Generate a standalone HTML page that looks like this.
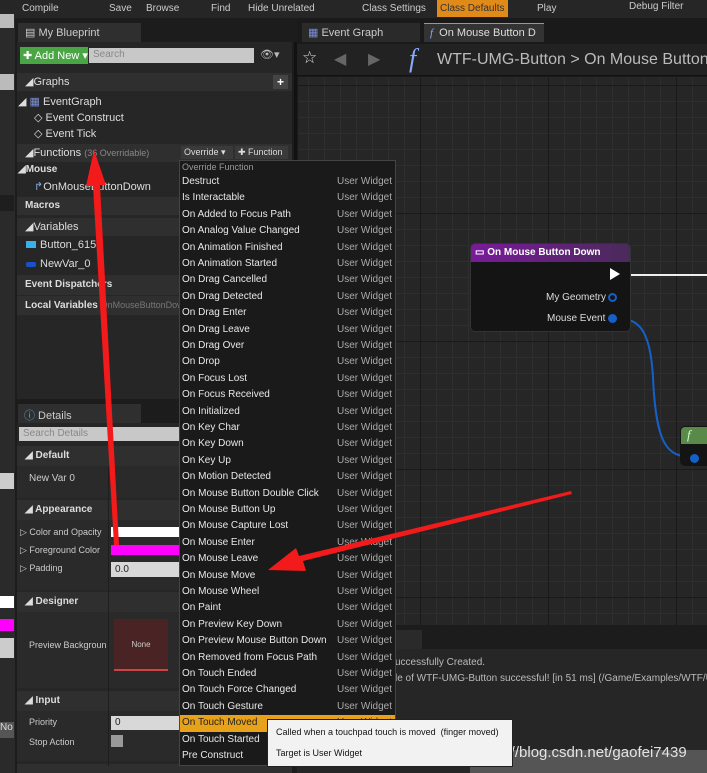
<!DOCTYPE html><html><head><style>
*{margin:0;padding:0;box-sizing:border-box}
body{width:707px;height:773px;overflow:hidden;background:#1a1a1a;font-family:"Liberation Sans",sans-serif;font-size:10px;color:#ddd;position:relative}
.a{position:absolute;white-space:nowrap}
.mi{position:absolute;left:182px;width:212px;height:16px;font-size:10px;color:#e8e8e8;line-height:16px}
.mi span{position:absolute;right:2px;color:#aaa}
.sec{position:absolute;left:17px;width:275px;background:#2f2f2f;font-weight:bold;font-size:10px;color:#ddd;padding-left:8px}
</style></head><body>
<!-- top toolbar -->
<div class="a" style="left:0;top:0;width:707px;height:18px;background:#262626"></div>
<div class="a" style="left:22px;top:3px;color:#ccc">Compile</div>
<div class="a" style="left:109px;top:3px;color:#ccc">Save</div>
<div class="a" style="left:146px;top:3px;color:#ccc">Browse</div>
<div class="a" style="left:211px;top:3px;color:#ccc">Find</div>
<div class="a" style="left:248px;top:3px;color:#ccc">Hide Unrelated</div>
<div class="a" style="left:362px;top:3px;color:#ccc">Class Settings</div>
<div class="a" style="left:437px;top:0;width:71px;height:17px;background:#e08a1a"></div>
<div class="a" style="left:440px;top:3px;color:#333">Class Defaults</div>
<div class="a" style="left:537px;top:3px;color:#ccc">Play</div>
<div class="a" style="left:629px;top:1px;color:#ccc">Debug Filter</div>
<!-- left strip -->
<div class="a" style="left:0;top:18px;width:15px;height:755px;background:#2a2a2a"></div>
<div class="a" style="left:0;top:14px;width:14px;height:14px;background:#bbb"></div>
<div class="a" style="left:0;top:74px;width:14px;height:16px;background:#bbb"></div>
<div class="a" style="left:0;top:195px;width:14px;height:16px;background:#1e1e1e"></div>
<div class="a" style="left:0;top:473px;width:14px;height:16px;background:#ccc"></div>
<div class="a" style="left:0;top:596px;width:14px;height:12px;background:#fff"></div>
<div class="a" style="left:0;top:619px;width:14px;height:12px;background:#f0f"></div>
<div class="a" style="left:0;top:638px;width:14px;height:20px;background:#ccc"></div>
<div class="a" style="left:0;top:722px;width:14px;height:16px;background:#555;color:#ddd">No</div>
<!-- My Blueprint panel -->
<div class="a" style="left:15px;top:18px;width:282px;height:382px;background:#1c1c1c"></div>
<div class="a" style="left:18px;top:23px;width:123px;height:19px;background:#2f2f2f"></div>
<div class="a" style="left:25px;top:26px;color:#ccc;font-size:11px">▤ My Blueprint</div>
<div class="a" style="left:17px;top:42px;width:275px;height:357px;background:#262626"></div>
<div class="a" style="left:20px;top:47px;width:68px;height:17px;background:#4aa545;color:#fff;font-size:11px;padding:2px 3px">✚ Add New ▾</div>
<div class="a" style="left:89px;top:48px;width:165px;height:15px;background:#c8c8c8;color:#888;font-size:10px;padding:1px 4px">Search</div>
<div class="a" style="left:260px;top:48px;color:#bbb;font-size:11px">👁▾</div>
<div class="sec" style="top:73px;height:18px;line-height:18px;font-weight:normal;font-size:11px">◢Graphs</div>
<div class="a" style="left:273px;top:75px;width:15px;height:14px;background:#444;color:#fff;text-align:center;font-weight:bold;font-size:12px;line-height:14px">+</div>
<div class="a" style="left:18px;top:95px;font-size:11px;color:#ddd">◢ <span style="color:#7b8fd8">▦</span> EventGraph</div>
<div class="a" style="left:34px;top:111px;font-size:11px;color:#ddd">◇ Event Construct</div>
<div class="a" style="left:34px;top:127px;font-size:11px;color:#ddd">◇ Event Tick</div>
<div class="sec" style="top:144px;height:18px;line-height:18px;font-weight:normal;font-size:11px">◢Functions <span style="color:#888;font-size:9px">(36 Overridable)</span></div>
<div class="a" style="left:181px;top:146px;width:52px;height:13px;background:#3a3a3a;color:#ddd;font-size:9px;padding:1px 3px">Override ▾</div>
<div class="a" style="left:235px;top:146px;width:53px;height:13px;background:#3a3a3a;color:#ddd;font-size:9px;padding:1px 3px">✚ Function</div>
<div class="a" style="left:18px;top:164px;font-size:10px;font-weight:bold;color:#ddd">◢Mouse</div>
<div class="a" style="left:34px;top:180px;font-size:11px;color:#ddd"><span style="color:#8ad">↱</span>OnMouseButtonDown</div>
<div class="sec" style="top:197px;height:18px;line-height:18px">Macros</div>
<div class="sec" style="top:218px;height:18px;line-height:18px;font-weight:normal;font-size:11px">◢Variables</div>
<div class="a" style="left:26px;top:241px;width:10px;height:7px;background:#3ab0e8"></div>
<div class="a" style="left:40px;top:239px;font-size:11px">Button_615</div>
<div class="a" style="left:26px;top:262px;width:10px;height:5px;background:#1a50c8;border-radius:2px"></div>
<div class="a" style="left:40px;top:258px;font-size:11px">NewVar_0</div>
<div class="sec" style="top:275px;height:20px;line-height:20px">Event Dispatchers</div>
<div class="sec" style="top:296px;height:19px;line-height:19px">Local Variables <span style="color:#777;font-weight:normal;font-size:9px">OnMouseButtonDown</span></div>
<div class="a" style="left:294px;top:42px;width:3px;height:358px;background:#111"></div>
<!-- details panel -->
<div class="a" style="left:15px;top:400px;width:282px;height:373px;background:#1c1c1c"></div>
<div class="a" style="left:18px;top:404px;width:123px;height:19px;background:#2f2f2f"></div>
<div class="a" style="left:24px;top:407px;color:#ccc;font-size:11px"><span style="color:#5ac">ⓘ</span> Details</div>
<div class="a" style="left:17px;top:423px;width:275px;height:350px;background:#262626"></div>
<div class="a" style="left:19px;top:427px;width:165px;height:14px;background:#c8c8c8;color:#888;padding:1px 4px">Search Details</div>
<div class="sec" style="top:446px;height:20px;line-height:20px">◢ Default</div>
<div class="a" style="left:17px;top:466px;width:275px;height:32px;background:#2a2a2a"></div>
<div class="a" style="left:29px;top:473px;color:#ccc">New Var 0</div>
<div class="sec" style="top:500px;height:20px;line-height:20px">◢ Appearance</div>
<div class="a" style="left:17px;top:520px;width:275px;height:70px;background:#2a2a2a"></div>
<div class="a" style="left:20px;top:527px;color:#ccc;font-size:9px">▷ Color and Opacity</div>
<div class="a" style="left:111px;top:527px;width:70px;height:10px;background:#fff"></div>
<div class="a" style="left:20px;top:545px;color:#ccc;font-size:9px">▷ Foreground Color</div>
<div class="a" style="left:111px;top:545px;width:70px;height:10px;background:#f0f"></div>
<div class="a" style="left:20px;top:563px;color:#ccc;font-size:9px">▷ Padding</div>
<div class="a" style="left:111px;top:562px;width:70px;height:15px;background:#d8d8d8;color:#222;padding:2px 4px">0.0</div>
<div class="sec" style="top:592px;height:20px;line-height:20px">◢ Designer</div>
<div class="a" style="left:17px;top:612px;width:275px;height:76px;background:#2a2a2a"></div>
<div class="a" style="left:29px;top:640px;color:#ccc;font-size:9px">Preview Backgroun</div>
<div class="a" style="left:114px;top:619px;width:54px;height:52px;background:#4a2424;border-bottom:2px solid #c44;color:#ccc;font-size:8px;text-align:center;line-height:52px">None</div>
<div class="sec" style="top:691px;height:20px;line-height:20px">◢ Input</div>
<div class="a" style="left:17px;top:711px;width:275px;height:50px;background:#2a2a2a"></div>
<div class="a" style="left:29px;top:717px;color:#ccc;font-size:9px">Priority</div>
<div class="a" style="left:111px;top:716px;width:70px;height:14px;background:#d8d8d8;color:#222;padding:1px 4px">0</div>
<div class="a" style="left:29px;top:737px;color:#ccc;font-size:9px">Stop Action</div>
<div class="a" style="left:111px;top:735px;width:12px;height:12px;background:#999"></div>
<div class="a" style="left:17px;top:764px;width:275px;height:9px;background:#2f2f2f"></div>
<div class="a" style="left:108px;top:466px;width:1px;height:300px;background:#1e1e1e"></div>
<!-- tabs right -->
<div class="a" style="left:297px;top:18px;width:410px;height:26px;background:#1a1a1a"></div>
<div class="a" style="left:302px;top:23px;width:118px;height:19px;background:#2a2a2a;color:#ccc;font-size:11px;padding:3px 6px"><span style="color:#7b8fd8">▦</span> Event Graph</div>
<div class="a" style="left:424px;top:23px;width:120px;height:19px;background:#333;border-top:1px solid #c90;color:#ddd;font-size:11px;padding:3px 6px"><i style="color:#8af;font-family:'Liberation Serif'">f</i>&nbsp; On Mouse Button D</div>
<!-- breadcrumb -->
<div class="a" style="left:297px;top:44px;width:410px;height:32px;background:#222;border-bottom:1px solid #111"></div>
<div class="a" style="left:302px;top:48px;color:#ddd;font-size:17px">☆</div>
<div class="a" style="left:334px;top:49px;color:#666;font-size:16px">◀</div>
<div class="a" style="left:368px;top:49px;color:#666;font-size:16px">▶</div>
<div class="a" style="left:409px;top:44px;color:#8af;font-size:26px;font-style:italic;font-family:'Liberation Serif'">f</div>
<div class="a" style="left:437px;top:51px;color:#bbb;font-size:16px">WTF-UMG-Button &gt; On Mouse Button</div>
<!-- graph grid -->
<div class="a" style="left:298px;top:77px;width:409px;height:548px;background-color:#262626;background-image:linear-gradient(#1a1a1a 1px,transparent 1px),linear-gradient(90deg,#1a1a1a 1px,transparent 1px),linear-gradient(#2e2e2e 1px,transparent 1px),linear-gradient(90deg,#2e2e2e 1px,transparent 1px);background-size:128px 128px,128px 128px,16px 16px,16px 16px;background-position:-6px 8px"></div>
<!-- node -->
<svg class="a" style="left:298px;top:77px" width="409" height="548"><path d="M316 241 C340 241 352 250 355 300 C358 370 370 380 395 380" stroke="#1560c8" stroke-width="2" fill="none"/><line x1="330" y1="198" x2="409" y2="198" stroke="#eee" stroke-width="2"/></svg>
<div class="a" style="left:470px;top:243px;width:161px;height:89px;background:#141414;border-radius:5px;border:1px solid #333"></div>
<div class="a" style="left:471px;top:244px;width:159px;height:18px;background:linear-gradient(90deg,#7a1a9a,#4a2a5a);border-radius:4px 4px 0 0;color:#fff;font-weight:bold;font-size:10px;padding:3px 4px">▭ On Mouse Button Down</div>
<div class="a" style="left:610px;top:268px;width:0;height:0;border-top:6px solid transparent;border-bottom:6px solid transparent;border-left:10px solid #fff"></div>
<div class="a" style="left:546px;top:292px;color:#ddd">My Geometry</div>
<div class="a" style="left:608px;top:293px;width:9px;height:9px;border:2px solid #1560c8;border-radius:50%"></div>
<div class="a" style="left:547px;top:313px;color:#ddd">Mouse Event</div>
<div class="a" style="left:608px;top:314px;width:9px;height:9px;background:#1560c8;border-radius:50%"></div>
<div class="a" style="left:680px;top:426px;width:27px;height:40px;background:#141414;border-radius:5px 0 0 5px"></div>
<div class="a" style="left:681px;top:427px;width:26px;height:17px;background:#5a8a4a;border-radius:4px 0 0 0;color:#cfc;font-style:italic;font-family:'Liberation Serif';padding-left:6px;font-size:13px">f</div>
<div class="a" style="left:690px;top:454px;width:9px;height:9px;background:#1560c8;border-radius:50%"></div>
<!-- output log -->
<div class="a" style="left:297px;top:625px;width:410px;height:148px;background:#1c1c1c"></div>
<div class="a" style="left:297px;top:630px;width:125px;height:19px;background:#2a2a2a"></div>
<div class="a" style="left:297px;top:649px;width:410px;height:124px;background:#262626"></div>
<div class="a" style="left:395px;top:657px;color:#bbb;font-size:10px">uccessfully Created.</div>
<div class="a" style="left:395px;top:673px;color:#bbb;font-size:10px">le of WTF-UMG-Button successful! [in 51 ms] (/Game/Examples/WTF/U</div>
<div class="a" style="left:470px;top:750px;width:237px;height:23px;background:#555"></div>
<div class="a" style="left:474px;top:744px;color:#f4f4f4;font-size:15px;opacity:.9">https://blog.csdn.net/gaofei7439</div>
<!-- menu -->
<div class="a" style="left:179px;top:160px;width:217px;height:606px;background:#1a1a1a;border:1px solid #444"></div>
<div class="a" style="left:182px;top:162px;color:#999;font-size:9px">Override Function</div>
<div class="a" style="left:180px;top:715px;width:215px;height:17px;background:#e8a21a"></div>
<div class="mi" style="top:174px">Destruct<span>User Widget</span></div>
<div class="mi" style="top:190px">Is Interactable<span>User Widget</span></div>
<div class="mi" style="top:207px">On Added to Focus Path<span>User Widget</span></div>
<div class="mi" style="top:223px">On Analog Value Changed<span>User Widget</span></div>
<div class="mi" style="top:240px">On Animation Finished<span>User Widget</span></div>
<div class="mi" style="top:256px">On Animation Started<span>User Widget</span></div>
<div class="mi" style="top:272px">On Drag Cancelled<span>User Widget</span></div>
<div class="mi" style="top:289px">On Drag Detected<span>User Widget</span></div>
<div class="mi" style="top:305px">On Drag Enter<span>User Widget</span></div>
<div class="mi" style="top:322px">On Drag Leave<span>User Widget</span></div>
<div class="mi" style="top:338px">On Drag Over<span>User Widget</span></div>
<div class="mi" style="top:354px">On Drop<span>User Widget</span></div>
<div class="mi" style="top:371px">On Focus Lost<span>User Widget</span></div>
<div class="mi" style="top:387px">On Focus Received<span>User Widget</span></div>
<div class="mi" style="top:404px">On Initialized<span>User Widget</span></div>
<div class="mi" style="top:420px">On Key Char<span>User Widget</span></div>
<div class="mi" style="top:436px">On Key Down<span>User Widget</span></div>
<div class="mi" style="top:453px">On Key Up<span>User Widget</span></div>
<div class="mi" style="top:469px">On Motion Detected<span>User Widget</span></div>
<div class="mi" style="top:486px">On Mouse Button Double Click<span>User Widget</span></div>
<div class="mi" style="top:502px">On Mouse Button Up<span>User Widget</span></div>
<div class="mi" style="top:518px">On Mouse Capture Lost<span>User Widget</span></div>
<div class="mi" style="top:535px">On Mouse Enter<span>User Widget</span></div>
<div class="mi" style="top:551px">On Mouse Leave<span>User Widget</span></div>
<div class="mi" style="top:568px">On Mouse Move<span>User Widget</span></div>
<div class="mi" style="top:584px">On Mouse Wheel<span>User Widget</span></div>
<div class="mi" style="top:600px">On Paint<span>User Widget</span></div>
<div class="mi" style="top:617px">On Preview Key Down<span>User Widget</span></div>
<div class="mi" style="top:633px">On Preview Mouse Button Down<span>User Widget</span></div>
<div class="mi" style="top:650px">On Removed from Focus Path<span>User Widget</span></div>
<div class="mi" style="top:666px">On Touch Ended<span>User Widget</span></div>
<div class="mi" style="top:682px">On Touch Force Changed<span>User Widget</span></div>
<div class="mi" style="top:699px">On Touch Gesture<span>User Widget</span></div>
<div class="mi" style="top:715px;color:#222">On Touch Moved<span style="color:#333">User Widget</span></div>
<div class="mi" style="top:732px">On Touch Started<span>User Widget</span></div>
<div class="mi" style="top:748px">Pre Construct<span>User Widget</span></div>
<!-- tooltip -->
<div class="a" style="left:267px;top:719px;width:246px;height:48px;background:#f2f2f2;border:1px solid #222"></div>
<div class="a" style="left:276px;top:727px;color:#111;font-size:9px">Called when a touchpad touch is moved&nbsp; (finger moved)</div>
<div class="a" style="left:276px;top:748px;color:#111;font-size:9px">Target is User Widget</div>
<!-- red arrows -->
<svg class="a" style="left:0;top:0" width="707" height="773">
<polygon points="114,545 119,545 100,185 106,185 94,150 86,186 93,186" fill="#f21a1a"/>
<polygon points="571,491 572,494 303,561 306,571 268,570 296,548 299,556" fill="#f21a1a"/>
</svg>
</body></html>
